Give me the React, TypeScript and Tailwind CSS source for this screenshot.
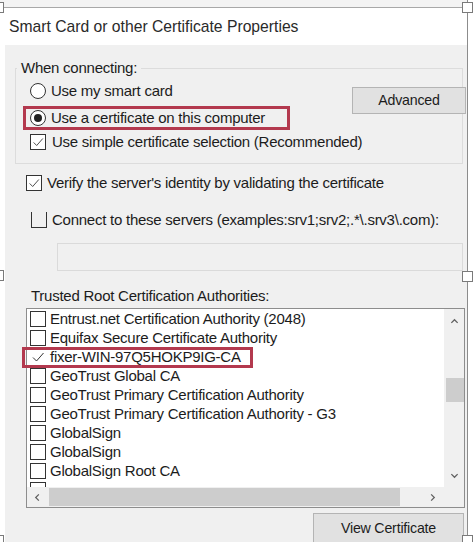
import type { ReactNode } from "react";

const certs = [
  { name: "Entrust.net Certification Authority (2048)", checked: false },
  { name: "Equifax Secure Certificate Authority", checked: false },
  { name: "fixer-WIN-97Q5HOKP9IG-CA", checked: true, bare: true },
  { name: "GeoTrust Global CA", checked: false },
  { name: "GeoTrust Primary Certification Authority", checked: false },
  { name: "GeoTrust Primary Certification Authority - G3", checked: false },
  { name: "GlobalSign", checked: false },
  { name: "GlobalSign", checked: false },
  { name: "GlobalSign Root CA", checked: false },
  { name: "", checked: false },
];

function Check() {
  return (
    <svg viewBox="0 0 16 16" className="h-full w-full">
      <path d="M3 8.5 L6.5 12 L13.5 4" fill="none" stroke="#333" strokeWidth="1" />
    </svg>
  );
}

function CheckBox({ checked, bare, open }: { checked?: boolean; bare?: boolean; open?: boolean }) {
  if (bare) {
    return (
      <span className="h-[16px] w-[16px] shrink-0">
        <Check />
      </span>
    );
  }
  return (
    <span
      className={
        open
          ? "h-[16px] w-[16px] shrink-0 border-b border-l border-r border-[#333] bg-transparent"
          : "h-[16px] w-[16px] shrink-0 border border-[#333] bg-white"
      }
    >
      {checked && <Check />}
    </span>
  );
}

function Radio({ selected }: { selected?: boolean }) {
  return (
    <span className="flex h-[16px] w-[16px] shrink-0 items-center justify-center rounded-full border border-[#333] bg-white">
      {selected && <span className="h-[8px] w-[8px] rounded-full bg-[#222]" />}
    </span>
  );
}

function Handle({ className }: { className: string }) {
  return <div className={"absolute h-[11px] w-[11px] border border-[#7a7a7a] bg-white " + className} />;
}

function Button({ children, className }: { children: ReactNode; className: string }) {
  return (
    <div
      className={
        "flex items-center justify-center whitespace-nowrap border border-[#b4b4b4] bg-[#e1e1e1] text-[14.2px] tracking-[-0.2px] " +
        className
      }
    >
      {children}
    </div>
  );
}

function Chevron({ d }: { d: string }) {
  return (
    <svg viewBox="0 0 10 10" className="h-[9px] w-[9px]">
      <path d={d} fill="none" stroke="#606060" strokeWidth="1.4" />
    </svg>
  );
}

export default function App() {
  return (
    <div className="relative h-[542px] w-[474px] overflow-hidden whitespace-nowrap bg-white font-['Liberation_Sans',Arial,sans-serif] text-[15px] tracking-[-0.25px] text-[#1c1c1c]">
      <div className="flex h-full w-[468px] flex-col border-r border-[#8c8c8c]">
        <div className="h-[8px] shrink-0 border-b border-[#a8a8a8] bg-[#f3f3f3]" />
        <div className="h-[37px] shrink-0 pl-[9px] pt-[9px] text-[15.7px] leading-[20px] tracking-normal text-[#2a2a2a]">
          Smart Card or other Certificate Properties
        </div>

        <div className="ml-[5px] flex flex-1 flex-col bg-[#f0f0f0]">
          {/* When connecting group */}
          <div className="relative ml-[10px] mr-[4px] mt-[23px] flex h-[96px] border border-[#dcdcdc] pl-[14px] pt-[12px]">
            <span className="absolute -top-[11px] left-[1px] bg-[#f0f0f0] px-[4px] leading-[20px]">
              When connecting:
            </span>
            <div className="flex w-[300px] flex-col">
              <div className="flex h-[20px] items-center gap-[5px]">
                <Radio />
                <span>Use my smart card</span>
              </div>
              <div className="-ml-[7px] mt-[5px] flex h-[24px] w-[267px] items-center gap-[5px] border-[3px] border-[#b3394e] pl-[4px]">
                <Radio selected />
                <span>Use a certificate on this computer</span>
              </div>
              <div className="mt-[2px] flex h-[20px] items-center gap-[6px]">
                <CheckBox checked />
                <span>Use simple certificate selection (Recommended)</span>
              </div>
            </div>
            <Button className="-mr-[4px] ml-auto mt-[6px] h-[27px] w-[114px]">Advanced</Button>
          </div>

          <div className="ml-[21px] mt-[9px] flex h-[20px] items-center gap-[5px]">
            <CheckBox checked />
            <span>Verify the server's identity by validating the certificate</span>
          </div>

          <div className="ml-[26px] mt-[17px] flex h-[20px] items-center gap-[5px]">
            <CheckBox open />
            <span>Connect to these servers (examples:srv1;srv2;.*\.srv3\.com):</span>
          </div>

          <div className="ml-[52px] mr-[4px] mt-[13px] h-[28px] border border-[#dadada] bg-[#f0f0f0]" />

          <div className="ml-[26px] mt-[15px] flex h-[20px] items-center">Trusted Root Certification Authorities:</div>

          {/* certificate list */}
          <div className="relative ml-[21px] mt-[2px] flex h-[200px] w-[439px] flex-col border border-[#8d8d8d] bg-white">
            <div className="flex min-h-0 flex-1">
              <div className="flex-1 overflow-hidden">
                {certs.map((c, i) => (
                  <div key={i} className="flex h-[19px] items-center gap-[4px] pl-[3px] leading-[19px]">
                    <CheckBox checked={c.checked} bare={c.bare} />
                    <span>{c.name}</span>
                  </div>
                ))}
              </div>
              <div className="flex w-[20px] flex-col items-center bg-[#f0f0f0]">
                <div className="flex h-[20px] items-center justify-center pt-[4px]">
                  <Chevron d="M1.5 6.5 L5 3 L8.5 6.5" />
                </div>
                <div className="ml-[1px] mt-[49px] h-[24px] w-[18px] bg-[#cdcdcd]" />
                <div className="mt-auto flex h-[20px] items-center justify-center pb-[4px]">
                  <Chevron d="M1.5 3.5 L5 7 L8.5 3.5" />
                </div>
              </div>
            </div>
            <div className="flex h-[20px] shrink-0 items-center bg-[#f0f0f0]">
              <div className="flex w-[20px] items-center justify-center">
                <Chevron d="M6.5 1.5 L3 5 L6.5 8.5" />
              </div>
              <div className="ml-[2px] h-[18px] w-[351px] bg-[#cdcdcd]" />
              <div className="ml-[22px] flex w-[20px] items-center justify-center">
                <Chevron d="M3.5 1.5 L7 5 L3.5 8.5" />
              </div>
              <div className="h-full flex-1 bg-[#f0f0f0]" />
            </div>
            <div className="absolute -left-[5px] top-[38px] h-[21px] w-[231px] border-[3px] border-[#b3394e]" />
          </div>

          <Button className="ml-auto mr-[3px] mt-[5px] h-[31px] w-[151px]">View Certificate</Button>
        </div>
      </div>

      <Handle className="-left-[7px] top-[2px]" />
      <Handle className="left-[462px] top-[2px]" />
      <Handle className="-left-[7px] top-[270px]" />
      <Handle className="left-[462px] top-[271px]" />
      <Handle className="-left-[7px] top-[535px]" />
      <Handle className="left-[462px] top-[535px]" />
    </div>
  );
}
